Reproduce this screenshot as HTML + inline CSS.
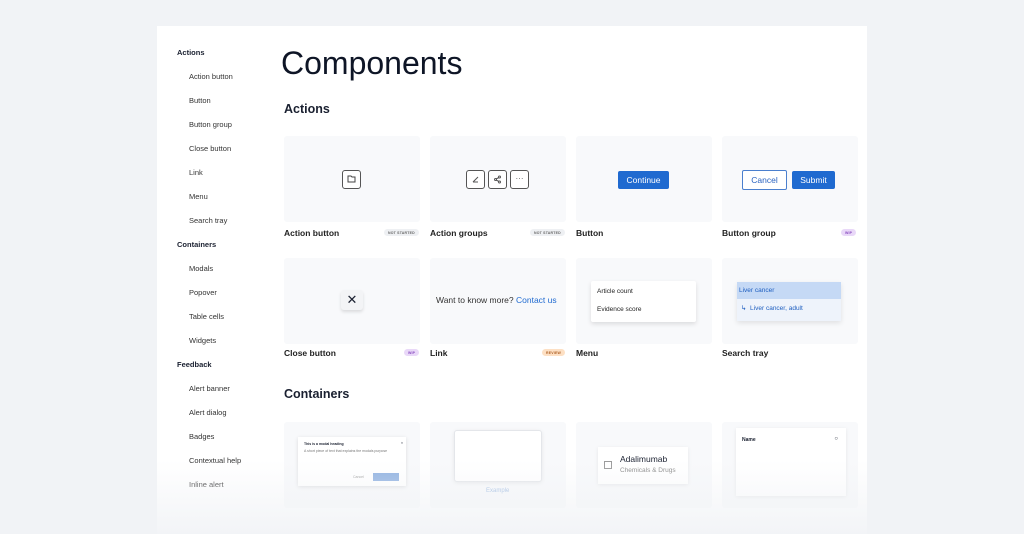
<!DOCTYPE html>
<html><head><meta charset="utf-8"><style>
*{margin:0;padding:0;box-sizing:border-box}
html,body{width:1024px;height:534px;overflow:hidden}
body{background:#f1f3f6;font-family:"Liberation Sans",Arial,sans-serif;position:relative;color:#1a2030}
.panel{position:absolute;left:157px;top:26px;width:710px;height:508px;background:#fff}
.a{position:absolute;white-space:nowrap}
.sh{font-size:7.5px;font-weight:bold;left:177px}
.si{font-size:7.5px;left:189px;color:#333}
.card{position:absolute;width:136px;height:86px;background:#f8f9fb;border-radius:3px}
.lbl{position:absolute;font-size:8.5px;font-weight:bold;color:#222}
.badge{position:absolute;font-size:3.5px;padding:1.5px 4px;border-radius:4px;font-weight:bold;letter-spacing:.2px}
.ib{position:absolute;width:19px;height:19px;border:1px solid #555;border-radius:3px;background:#fff}
.btn{position:absolute;height:18px;border-radius:2px;font-size:8.5px;text-align:center;line-height:18px}
.fade{position:absolute;left:0;top:460px;width:1024px;height:74px;background:linear-gradient(rgba(241,243,246,0),rgba(241,243,246,.9) 100%)}
</style></head><body>
<div class="panel"></div>
<div class="a sh" style="top:48px">Actions</div>
<div class="a si" style="top:72px">Action button</div>
<div class="a si" style="top:96px">Button</div>
<div class="a si" style="top:120px">Button group</div>
<div class="a si" style="top:144px">Close button</div>
<div class="a si" style="top:168px">Link</div>
<div class="a si" style="top:192px">Menu</div>
<div class="a si" style="top:216px">Search tray</div>
<div class="a sh" style="top:240px">Containers</div>
<div class="a si" style="top:264px">Modals</div>
<div class="a si" style="top:288px">Popover</div>
<div class="a si" style="top:312px">Table cells</div>
<div class="a si" style="top:336px">Widgets</div>
<div class="a sh" style="top:360px">Feedback</div>
<div class="a si" style="top:384px">Alert banner</div>
<div class="a si" style="top:408px">Alert dialog</div>
<div class="a si" style="top:432px">Badges</div>
<div class="a si" style="top:456px">Contextual help</div>
<div class="a si" style="top:480px">Inline alert</div>

<div class="a" style="left:281px;top:45px;font-size:32px;color:#0e1526">Components</div>
<div class="a" style="left:284px;top:102px;font-size:12.5px;font-weight:bold">Actions</div>

<div class="card" style="left:284px;top:136px"></div>
<div class="ib" style="left:342px;top:170px"><svg width="17" height="17" viewBox="0 0 17 17"><path d="M5 5h3l1 1h3v5H5z" fill="none" stroke="#444" stroke-width="1"/></svg></div>
<div class="lbl" style="left:284px;top:228px">Action button</div>
<div class="badge" style="left:384px;top:229px;background:#eef0f3;color:#666">NOT STARTED</div>

<div class="card" style="left:430px;top:136px"></div>
<div class="ib" style="left:466px;top:170px"><svg width="17" height="17" viewBox="0 0 17 17"><path d="M6 11l5-5M6 11h5" stroke="#555" fill="none"/></svg></div>
<div class="ib" style="left:488px;top:170px"><svg width="17" height="17" viewBox="0 0 17 17"><circle cx="6.5" cy="8.5" r="1" fill="none" stroke="#555"/><circle cx="10.5" cy="6" r="1" fill="none" stroke="#555"/><circle cx="10.5" cy="11" r="1" fill="none" stroke="#555"/><path d="M7 8l3-1.5M7 9l3 1.5" stroke="#555"/></svg></div>
<div class="ib" style="left:510px;top:170px;text-align:center;font-size:8px;line-height:15px;color:#555">···</div>
<div class="lbl" style="left:430px;top:228px">Action groups</div>
<div class="badge" style="left:530px;top:229px;background:#eef0f3;color:#666">NOT STARTED</div>

<div class="card" style="left:576px;top:136px"></div>
<div class="btn" style="left:618px;top:171px;width:51px;background:#1f6ad0;color:#fff">Continue</div>
<div class="lbl" style="left:576px;top:228px">Button</div>

<div class="card" style="left:722px;top:136px"></div>
<div class="btn" style="left:742px;top:170px;width:45px;height:20px;border:1px solid #4a7fce;color:#2a63c0;background:#fff">Cancel</div>
<div class="btn" style="left:792px;top:171px;width:43px;background:#1f6ad0;color:#fff">Submit</div>
<div class="lbl" style="left:722px;top:228px">Button group</div>
<div class="badge" style="left:841px;top:229px;background:#e9d8f8;color:#8a4fc0">WIP</div>

<div class="card" style="left:284px;top:258px"></div>
<div class="a" style="left:341px;top:290px;width:22px;height:20px;background:#f3f4f6;box-shadow:0 2px 3px rgba(0,0,0,.12);border-radius:3px;text-align:center;font-size:13px;line-height:20px">✕</div>
<div class="lbl" style="left:284px;top:348px">Close button</div>
<div class="badge" style="left:404px;top:349px;background:#e9d8f8;color:#8a4fc0">WIP</div>

<div class="card" style="left:430px;top:258px"></div>
<div class="a" style="left:436px;top:295px;font-size:8.5px;color:#333">Want to know more? <span style="color:#1f6ad0">Contact us</span></div>
<div class="lbl" style="left:430px;top:348px">Link</div>
<div class="badge" style="left:542px;top:349px;background:#fde0c4;color:#b0642a">REVIEW</div>

<div class="card" style="left:576px;top:258px"></div>
<div class="a" style="left:591px;top:281px;width:105px;height:41px;background:#fff;box-shadow:0 2px 5px rgba(0,0,0,.12);border-radius:2px;font-size:6.5px;color:#222"><div style="position:absolute;left:6px;top:7px">Article count</div><div style="position:absolute;left:6px;top:25px">Evidence score</div></div>
<div class="lbl" style="left:576px;top:348px">Menu</div>

<div class="card" style="left:722px;top:258px"></div>
<div class="a" style="left:737px;top:282px;width:104px;height:39px;background:#eef3fb;box-shadow:0 2px 5px rgba(0,0,0,.1);font-size:6.5px;color:#1f5fc0"><div style="height:17px;background:#c5d9f5;padding:5px 0 0 2px">Liver cancer</div><div style="padding:5px 0 0 4px">↳&nbsp; Liver cancer, adult</div></div>
<div class="lbl" style="left:722px;top:348px">Search tray</div>

<div class="a" style="left:284px;top:387px;font-size:12.5px;font-weight:bold">Containers</div>

<div class="card" style="left:284px;top:422px"></div>
<div class="a" style="left:298px;top:437px;width:108px;height:49px;background:#fff;box-shadow:0 1px 4px rgba(0,0,0,.12);font-size:3.5px"><div style="position:absolute;left:6px;top:5px;font-weight:bold">This is a modal heading</div><div style="position:absolute;left:6px;top:12px;color:#777">A short piece of text that explains the modals purpose</div><div style="position:absolute;right:3px;top:4px">×</div><div style="position:absolute;left:55px;top:38px;color:#999">Cancel</div><div style="position:absolute;top:36px;width:26px;height:8px;background:#8eb0e0;left:75px"></div></div>

<div class="card" style="left:430px;top:422px"></div>
<div class="a" style="left:454px;top:430px;width:88px;height:52px;background:#fff;border:1px solid #e4e6ea;border-radius:3px;box-shadow:0 1px 4px rgba(0,0,0,.08)"></div>
<div class="a" style="left:486px;top:488px;font-size:6px;color:#9bb8e0">Example</div>

<div class="card" style="left:576px;top:422px"></div>
<div class="a" style="left:598px;top:447px;width:90px;height:37px;background:#fff;box-shadow:0 1px 4px rgba(0,0,0,.08)"><div style="position:absolute;left:6px;top:14px;width:8px;height:8px;border:1px solid #999"></div><div style="position:absolute;left:22px;top:7px;font-size:8.5px">Adalimumab</div><div style="position:absolute;left:22px;top:20px;font-size:6.5px;color:#888">Chemicals &amp; Drugs</div></div>

<div class="card" style="left:722px;top:422px"></div>
<div class="a" style="left:736px;top:428px;width:110px;height:68px;background:#fff;box-shadow:0 1px 4px rgba(0,0,0,.08)"><div style="position:absolute;left:6px;top:9px;font-size:5px;font-weight:bold">Name</div><div style="position:absolute;right:8px;top:8px;font-size:6px">○</div></div>

<div class="fade"></div>
</body></html>
